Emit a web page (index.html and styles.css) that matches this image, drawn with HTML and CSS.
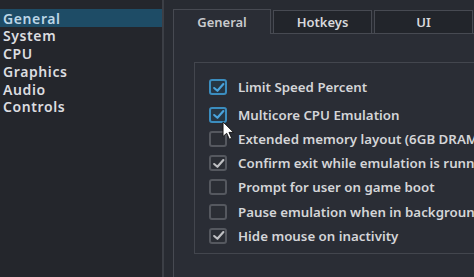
FILE: index.html
```html
<!DOCTYPE html>
<html>
<head>
<meta charset="utf-8">
<link rel="stylesheet" href="styles.css">
</head>
<body>
<div class="app">
  <aside class="sidebar">
    <div class="item selected">General</div>
    <div class="item">System</div>
    <div class="item">CPU</div>
    <div class="item">Graphics</div>
    <div class="item">Audio</div>
    <div class="item">Controls</div>
  </aside>
  <main class="content">
    <div class="tabs">
      <div class="tab active">General</div>
      <div class="tab">Hotkeys</div>
      <div class="tab">UI</div>
    </div>
    <div class="pane">
      <div class="group">
        <div class="row first"><span class="cb on"><svg viewBox="0 0 12 12"><path d="M2 6.5 L5 9 L10.5 2.8"/></svg></span><span class="label">Limit Speed Percent</span></div>
        <div class="row second"><span class="cb on"><svg viewBox="0 0 12 12"><path d="M2 6.5 L5 9 L10.5 2.8"/></svg></span><span class="label">Multicore CPU Emulation</span></div>
        <div class="row"><span class="cb"></span><span class="label">Extended memory layout (6GB DRAM)</span></div>
        <div class="row"><span class="cb gray"><svg viewBox="0 0 12 12"><path d="M2 6.5 L5 9 L10.5 2.8"/></svg></span><span class="label">Confirm exit while emulation is running</span></div>
        <div class="row"><span class="cb"></span><span class="label">Prompt for user on game boot</span></div>
        <div class="row"><span class="cb"></span><span class="label">Pause emulation when in background</span></div>
        <div class="row"><span class="cb gray"><svg viewBox="0 0 12 12"><path d="M2 6.5 L5 9 L10.5 2.8"/></svg></span><span class="label">Hide mouse on inactivity</span></div>
      </div>
    </div>
    <svg class="cursor" viewBox="0 0 14 22" width="13" height="20"><path d="M1 1 L1 17 L5 13.5 L8 20 L10.5 19 L7.5 12.5 L12.5 12.5 Z"/></svg>
  </main>
</div>
</body>
</html>
```
FILE: styles.css
```css
* { box-sizing: border-box; }
html, body { margin: 0; padding: 0; }
body {
  width: 474px;
  height: 277px;
  overflow: hidden;
  background: #282b32;
  font-family: "Noto Sans", "Open Sans", sans-serif;
  color: #d6d7d9;
}
.app { display: flex; height: 277px; }
.sidebar {
  width: 164px;
  flex: none;
  background: #24262c;
  border-right: 2px solid #3c3f46;
  padding-top: 9px;
}
.item {
  height: 17.8px;
  line-height: 17px;
  padding-left: 3px;
  padding-top: 0.5px;
  font-size: 14px;
  font-weight: 600;
  letter-spacing: 0.6px;
  color: #dcdde0;
}
.item.selected { background: #1e4c66; color: #bcd6e6; }
.content {
  position: relative;
  flex: 1;
  padding: 9px 0 0 9px;
  display: flex;
  flex-direction: column;
}
.tabs { display: flex; gap: 2px; height: 24px; align-items: flex-end; position: relative; z-index: 1; }
.tab {
  width: 99px;
  height: 23px;
  border: 1px solid #474a52;
  border-bottom: none;
  background: #22252b;
  display: flex;
  align-items: center;
  justify-content: center;
  font-size: 13px;
  font-weight: 600;
  color: #d8d9dc;
}
.tab.active {
  width: 98px;
  height: 25px;
  background: #2a2d35;
  margin-bottom: -1px;
  color: #c9cacd;
}
.pane {
  flex: 1;
  border: 1px solid #474a52;
  border-right: none;
  border-bottom: none;
  background: #2a2d35;
  padding: 28px 0 0 20px;
}
.group {
  height: 192px;
  border: 1px solid #43464e;
  border-right: none;
  padding: 12px 0 0 14px;
}
.row {
  display: flex;
  align-items: center;
  height: 24.2px;
  gap: 11px;
}
.row.second { margin-top: 3.6px; }
.cb {
  width: 18px;
  height: 16px;
  border: 2px solid #55585f;
  border-radius: 3px;
  flex: none;
  display: flex;
  align-items: center;
  justify-content: center;
  background: #2b2e35;
}
.cb svg { width: 13px; height: 13px; }
.cb svg path { fill: none; stroke-width: 2; stroke-linecap: round; stroke-linejoin: round; }
.cb.on { border-color: #3b8dbf; background: #263644; }
.cb.on svg path { stroke: #4aa3dc; }
.cb.gray svg path { stroke: #bfc0c3; }
.label {
  font-size: 13.3px;
  font-weight: 600;
  white-space: nowrap;
  color: #d4d5d8;
}
.cursor {
  position: absolute;
  left: 58px;
  top: 121px;
}
.cursor path { fill: #ffffff; stroke: #111; stroke-width: 1; }
```
